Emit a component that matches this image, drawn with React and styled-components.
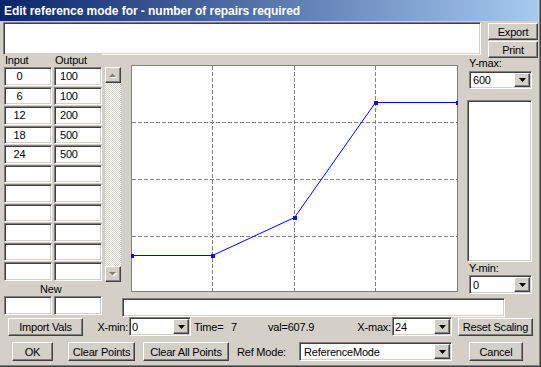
import React from 'react';
import styled, { createGlobalStyle, css } from 'styled-components';

const Global = createGlobalStyle`
  html, body { margin: 0; padding: 0; background: #d4d0c8; }
  body { font-family: "Liberation Sans", Arial, sans-serif; font-size: 11px; color: #000; }
  * { box-sizing: border-box; }
`;

const sunken = css`
  border: 1px solid;
  border-color: #808080 #fff #fff #808080;
  box-shadow: inset 1px 1px #404040, inset -1px -1px #d4d0c8;
  background: #fff;
`;

const raised = css`
  border: 1px solid;
  border-color: #fff #404040 #404040 #fff;
  box-shadow: inset -1px -1px #808080;
  background: #d4d0c8;
`;

const Window = styled.div`
  width: 541px;
  height: 367px;
  background: #d4d0c8;
  overflow: hidden;
  display: flex;
  flex-direction: column;
  letter-spacing: -0.2px;
  box-shadow: inset -1px -1px #404040, inset -2px -2px #808080;
`;

const TitleBar = styled.div`
  flex: none;
  width: 538px;
  height: 21px;
  background: linear-gradient(to right, #0a246a, #a6caf0);
  color: #fff;
  font-weight: bold;
  font-size: 12px;
  letter-spacing: -0.05px;
  line-height: 14px;
  padding: 4px 0 0 4px;
  white-space: nowrap;
`;

const TopRow = styled.div`
  flex: none;
  display: flex;
  align-items: flex-start;
  height: 33px;
  margin-top: 1px;
  padding-left: 3px;
`;

const TopText = styled.div`
  ${sunken}
  width: 478px;
  height: 33px;
`;

const TopButtons = styled.div`
  position: relative;
  z-index: 2;
  margin: 1px 0 0 7px;
  display: flex;
  flex-direction: column;
  gap: 1px;
`;

const Btn = styled.div`
  ${raised}
  flex: none;
  width: ${p => p.$w}px;
  height: ${p => p.$h || 19}px;
  margin-left: ${p => p.$ml || 0}px;
  display: flex;
  align-items: center;
  justify-content: center;
  white-space: nowrap;
`;

const Main = styled.div`
  flex: none;
  display: flex;
  height: 262px;
`;

const LeftCol = styled.div`
  margin-left: 4px;
  width: 98px;
  display: flex;
  flex-direction: column;
`;

const HeadLabels = styled.div`
  position: relative;
  z-index: 1;
  margin-top: -1px;
  height: 13px;
  line-height: 13px;
  background: #d4d0c8;
  display: grid;
  grid-template-columns: 48px 48px;
  column-gap: 2px;
  & > span { padding-left: 1px; }
`;

const CellGrid = styled.div`
  display: grid;
  grid-template-columns: 48px 48px;
  column-gap: 2px;
  grid-template-rows: repeat(${p => p.$rows}, 1fr);
  row-gap: 1px;
  height: ${p => p.$h}px;
`;

const Cell = styled.div`
  ${sunken}
  display: flex;
  align-items: center;
  justify-content: ${p => (p.$center ? 'center' : 'flex-start')};
  padding: ${p => (p.$center ? '0 17px 0 0' : '0 0 0 5px')};
`;

const NewLabel = styled.div`
  height: 15px;
  line-height: 13px;
  padding: 2px 0 0 36px;
`;

const RightSection = styled.div`
  display: flex;
  flex-direction: column;
`;

const ChartRow = styled.div`
  display: flex;
  align-items: flex-start;
  height: 243px;
`;

const Scroll = styled.div`
  margin: 12px 0 0 3px;
  width: 16px;
  height: 215px;
  display: flex;
  flex-direction: column;
`;

const ScrollBtn = styled.div`
  ${raised}
  flex: none;
  height: 16px;
  display: flex;
  align-items: center;
  justify-content: center;
`;

const ScrollTrack = styled.div`
  flex: 1;
  background: repeating-conic-gradient(#ffffff 0 25%, #d4d0c8 0 50%) 0 0 / 2px 2px;
`;

const ChartBox = styled.div`
  margin: 10px 0 0 10px;
  width: 327px;
  height: 227px;
  background: #fff;
  & svg { display: block; }
`;

const RightCol = styled.div`
  margin-left: 9px;
  width: 65px;
  display: flex;
  flex-direction: column;
`;

const SideLabel = styled.div`
  height: ${p => p.$h}px;
  line-height: 13px;
  padding: ${p => p.$pt || 0}px 0 0 2px;
`;

const Combo = styled.div`
  ${sunken}
  flex: none;
  width: ${p => p.$w}px;
  height: ${p => p.$h || 19}px;
  margin-left: ${p => p.$ml || 0}px;
  padding: 1px;
  display: flex;
  align-items: stretch;
`;

const ComboValue = styled.div`
  flex: 1;
  padding-left: ${p => p.$pl ?? 1}px;
  display: flex;
  align-items: center;
  white-space: nowrap;
  overflow: hidden;
`;

const DropBtn = styled.div`
  ${raised}
  flex: none;
  width: 16px;
  display: flex;
  align-items: center;
  justify-content: center;
`;

const ListBox = styled.div`
  ${sunken}
  margin-top: 11px;
  width: 65px;
  height: 162px;
`;

const LongText = styled.div`
  ${sunken}
  margin-left: 20px;
  width: 383px;
  height: 19px;
`;

const Row = styled.div`
  flex: none;
  display: flex;
  align-items: center;
  height: 19px;
  margin-top: ${p => p.$mt || 0}px;
`;

const Label = styled.div`
  flex: none;
  width: ${p => p.$w}px;
  margin-left: ${p => p.$ml || 0}px;
  text-align: ${p => p.$align || 'left'};
  padding-right: ${p => (p.$align === 'right' ? 1 : 0)}px;
  white-space: nowrap;
`;

const DownArrow = () => (
  <svg width="7" height="4" viewBox="0 0 7 4">
    <polygon points="0,0 7,0 3.5,4" fill="#000" />
  </svg>
);

const ScrollArrow = ({ up }) => (
  <svg width="8" height="5" viewBox="0 0 8 5">
    {up ? (
      <>
        <polygon points="1,5 8,5 4.5,1.5" fill="#fff" />
        <polygon points="0,4 7,4 3.5,0.5" fill="#808080" />
      </>
    ) : (
      <>
        <polygon points="1,1 8,1 4.5,4.5" fill="#fff" />
        <polygon points="0,0 7,0 3.5,3.5" fill="#808080" />
      </>
    )}
  </svg>
);

const ComboBox = ({ value, w, h, ml, pl }) => (
  <Combo $w={w} $h={h} $ml={ml}>
    <ComboValue $pl={pl}>{value}</ComboValue>
    <DropBtn>
      <DownArrow />
    </DropBtn>
  </Combo>
);

const data = [
  [0, 100],
  [6, 100],
  [12, 200],
  [18, 500],
  [24, 500],
];

const px = v => Math.floor(v * (326 / 24)) + 0.5;
const py = v => Math.round(228 - v * 0.3812) + 0.5;

const Chart = () => {
  const vx = [6, 12, 18].map(px);
  const hy = [57.5, 114.5, 171.5];
  const line = data.map(([x, y]) => `${Math.min(px(x), 326)},${py(y)}`).join(' ');
  return (
    <svg width="327" height="227" viewBox="0 0 327 227">
      <g stroke="#808080" strokeWidth="1" strokeDasharray="4 2" shapeRendering="crispEdges">
        {vx.map(x => (
          <line key={'v' + x} x1={x} y1="1" x2={x} y2="226" />
        ))}
        {hy.map(y => (
          <line key={'h' + y} x1="1" y1={y} x2="326" y2={y} />
        ))}
      </g>
      <rect x="0.5" y="0.5" width="326" height="226" fill="none" stroke="#808080" shapeRendering="crispEdges" />
      <polyline points={line} fill="none" stroke="#0000ff" strokeWidth="1" />
      {data.map(([x, y]) => {
        const cx = Math.min(px(x), 326);
        const cy = py(y);
        return (
          <rect key={x} x={cx - 1.5} y={cy - 1.5} width="4" height="4" fill="#1010e0" shapeRendering="crispEdges" />
        );
      })}
    </svg>
  );
};

const inputs = ['0', '6', '12', '18', '24'];
const outputs = ['100', '100', '200', '500', '500'];

export default function App() {
  const rows = Array.from({ length: 11 }, (_, i) => [inputs[i] || '', outputs[i] || '']);
  return (
    <>
      <Global />
      <Window>
        <TitleBar>Edit reference mode for - number of repairs required</TitleBar>
        <TopRow>
          <TopText />
          <TopButtons>
            <Btn $w={50} $h={17}>Export</Btn>
            <Btn $w={50} $h={17}>Print</Btn>
          </TopButtons>
        </TopRow>
        <Main>
          <LeftCol>
            <HeadLabels>
              <span>Input</span>
              <span>Output</span>
            </HeadLabels>
            <CellGrid $rows={11} $h={214}>
              {rows.map(([a, b], i) => (
                <React.Fragment key={i}>
                  <Cell $center>{a}</Cell>
                  <Cell>{b}</Cell>
                </React.Fragment>
              ))}
            </CellGrid>
            <NewLabel>New</NewLabel>
            <CellGrid $rows={1} $h={19}>
              <Cell $center />
              <Cell />
            </CellGrid>
          </LeftCol>
          <RightSection>
            <ChartRow>
              <Scroll>
                <ScrollBtn>
                  <ScrollArrow up />
                </ScrollBtn>
                <ScrollTrack />
                <ScrollBtn>
                  <ScrollArrow />
                </ScrollBtn>
              </Scroll>
              <ChartBox>
                <Chart />
              </ChartBox>
              <RightCol>
                <SideLabel $h={16} $pt={2}>Y-max:</SideLabel>
                <ComboBox value="600" w={63} h={18} ml={2} pl={2} />
                <ListBox />
                <SideLabel $h={13}>Y-min:</SideLabel>
                <ComboBox value="0" w={63} h={19} ml={2} pl={2} />
              </RightCol>
            </ChartRow>
            <LongText />
          </RightSection>
        </Main>
        <Row>
          <Btn $w={75} $h={18} $ml={8}>Import Vals</Btn>
          <Label $w={46} $align="right">X-min:</Label>
          <ComboBox value="0" w={62} h={19} />
          <Label $w={37} $ml={3}>Time=</Label>
          <Label $w={37}>7</Label>
          <Label $w={76}>val=607.9</Label>
          <Label $w={48} $align="right">X-max:</Label>
          <ComboBox value="24" w={60} h={19} />
          <Btn $w={75} $h={18} $ml={6}>Reset Scaling</Btn>
        </Row>
        <Row $mt={6}>
          <Btn $w={41} $ml={12}>OK</Btn>
          <Btn $w={67} $ml={15}>Clear Points</Btn>
          <Btn $w={86} $ml={8}>Clear All Points</Btn>
          <Label $w={62} $ml={8}>Ref Mode:</Label>
          <ComboBox value="ReferenceMode" w={153} h={19} pl={3} />
          <Btn $w={54} $ml={17}>Cancel</Btn>
        </Row>
      </Window>
    </>
  );
}
